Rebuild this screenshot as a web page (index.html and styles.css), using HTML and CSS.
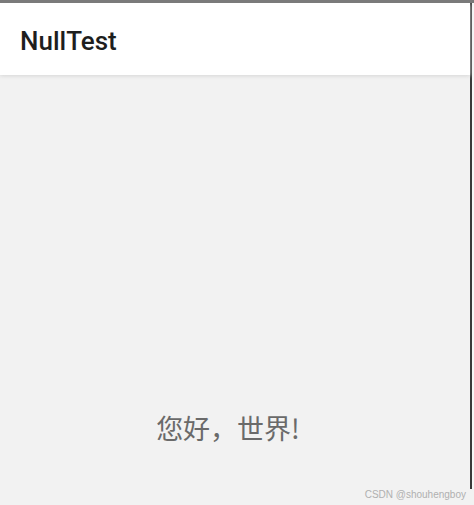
FILE: index.html
```html
<!DOCTYPE html>
<html lang="zh">
<head>
    <meta charset="UTF-8">
    <title>NullTest</title>
    <link rel="stylesheet" href="styles.css">
</head>
<body>
    <div id="frame">
        <div id="screen">
            <div id="header">
                <h1>NullTest</h1>
            </div>
            <div id="content">
                <p class="hello">您好，世界!</p>
            </div>
        </div>
        <div id="edge"></div>
    </div>
    <div class="mark">CSDN @shouhengboy</div>
</body>
</html>
```

FILE: styles.css
```css
* {
    margin: 0;
    padding: 0;
    box-sizing: border-box;
}

html, body {
    width: 474px;
    height: 505px;
    overflow: hidden;
}

body {
    font-family: Roboto, "Noto Sans CJK SC", sans-serif;
    background-color: #f2f2f2;
    display: flex;
    flex-direction: column;
    border-top: 3px solid #7a7a7a;
}

#frame {
    display: flex;
    height: 486px;
}

#screen {
    flex-grow: 1;
    display: flex;
    flex-direction: column;
}

#edge {
    width: 4px;
    border-left: 2px solid #3a3a3a;
    background-color: #f6f6f6;
}

#header {
    background-color: #fff;
    height: 72px;
    display: flex;
    align-items: center;
    padding-left: 20px;
    box-shadow: 0px 1px 4px #d6d6d6;
    position: relative;
}

#header h1 {
    font-size: 26px;
    font-weight: 500;
    color: #1e1e1e;
    padding-top: 3px;
}

#content {
    flex-grow: 1;
    display: flex;
    justify-content: center;
    padding-top: 336px;
}

.hello {
    font-family: "Noto Sans CJK SC", sans-serif;
    font-size: 27px;
    color: #6a6a6a;
    height: 34px;
    line-height: 34px;
    padding-right: 14px;
}

.mark {
    font-family: "Liberation Sans", Arial, sans-serif;
    font-size: 10px;
    color: #b0b0b0;
    text-align: right;
    padding-right: 8px;
    line-height: 12px;
}
```
